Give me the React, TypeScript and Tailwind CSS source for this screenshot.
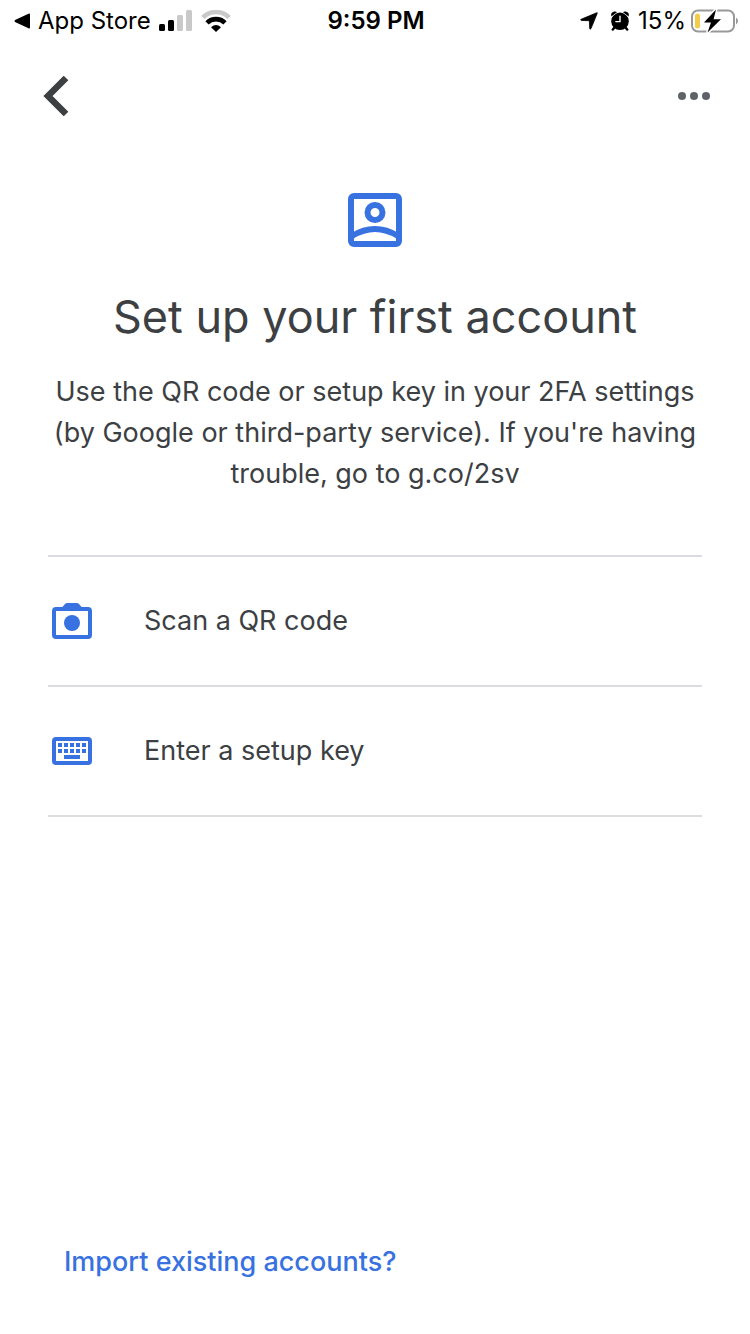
import React from 'react';

const SignalIcon: React.FC = () => (
  <svg className="w-[34px] h-[22px]" viewBox="0 0 34 22" aria-hidden="true">
    <rect x="0" y="14" width="6" height="7" rx="1.5" fill="#000" />
    <rect x="9" y="10" width="6" height="11" rx="1.5" fill="#000" />
    <rect x="18" y="5" width="6" height="16" rx="1.5" fill="#c9c9c9" />
    <rect x="27" y="0" width="6" height="21" rx="1.5" fill="#c9c9c9" />
  </svg>
);

const WifiIcon: React.FC = () => (
  <svg className="w-[30px] h-[22px]" viewBox="0 0 30 22" fill="none" aria-hidden="true">
    <path d="M1.8 7.5C9 0.2 21 0.2 28.2 7.5" stroke="#c9c9c9" strokeWidth="4.6" />
    <path d="M6 12.8C11 7.9 19 7.9 24 12.8" stroke="#000" strokeWidth="4.6" />
    <path d="M10 17.2Q15 12.8 20 17.2L15 22Z" fill="#000" />
  </svg>
);

const LocationIcon: React.FC = () => (
  <svg className="w-[18px] h-[18px]" viewBox="0 0 18 18" aria-hidden="true">
    <path
      d="M16.6 0.8Q17.6 0.4 17.2 1.4L11 16.6Q10.2 17.8 9.7 16.6L9.4 9.3Q9.4 8.7 8.8 8.7L1.2 8.4Q0 7.9 1.1 7.3Z"
      fill="#000"
      stroke="#000"
      strokeWidth="0.8"
    />
  </svg>
);

const AlarmIcon: React.FC = () => (
  <svg className="w-5 h-5" viewBox="-1 0 20 20" fill="none" aria-hidden="true">
    <circle cx="9" cy="10.3" r="8.8" fill="#000" />
    <path d="M0.4 5.4Q-0.8 1.4 3.2 0.5Q5 0.2 6.2 1.4ZM17.6 5.4Q18.8 1.4 14.8 0.5Q13 0.2 11.8 1.4Z" fill="#000" />
    <path d="M6.4 1.2L0.6 5.8M11.6 1.2L17.4 5.8" stroke="#fff" strokeWidth="0.6" />
    <path d="M3.5 16.5L1.8 18.6M14.5 16.5L16.2 18.6" stroke="#000" strokeWidth="2.4" strokeLinecap="round" />
    <path d="M9 5.2V10.6H4.8" stroke="#fff" strokeWidth="1.4" strokeLinecap="round" />
  </svg>
);

const BatteryIcon: React.FC = () => (
  <svg className="w-12 h-6" viewBox="0 0 48 24" fill="none" aria-hidden="true">
    <rect x="2" y="1.5" width="42" height="21" rx="6" stroke="#999" strokeWidth="2" />
    <path d="M46 8.5Q48 9.5 48 12T46 15.5Z" fill="#999" />
    <rect x="5" y="4.5" width="5" height="15" rx="2.5" fill="#f3cc4b" />
    <path
      d="M26 0.5L14 13.4H21L17.5 23.5L31 10.2H23.6Z"
      fill="#000"
      stroke="#fff"
      strokeWidth="3"
      strokeLinejoin="round"
      paintOrder="stroke"
    />
  </svg>
);

const AccountIcon: React.FC = () => (
  <svg className="w-[54px] h-[54px]" viewBox="0 0 54 54" fill="none" stroke="currentColor" strokeWidth="6" aria-hidden="true">
    <rect x="3" y="3" width="48" height="48" rx="3" />
    <circle cx="27" cy="19.5" r="7.5" />
    <path d="M4 43Q27 29 50 43" />
  </svg>
);

const CameraIcon: React.FC = () => (
  <svg className="w-10 h-9" viewBox="0 0 40 36" aria-hidden="true">
    <path d="M9.5 5L13 1Q14 0 15 0H25Q26 0 27 1L30.5 5Z" fill="currentColor" />
    <rect x="2" y="6" width="36" height="28" rx="2" fill="none" stroke="currentColor" strokeWidth="4" />
    <circle cx="20" cy="20" r="8" fill="currentColor" />
  </svg>
);

const KeyboardIcon: React.FC = () => (
  <svg className="w-10 h-7" viewBox="0 0 40 28" fill="currentColor" aria-hidden="true">
    <rect x="2" y="2" width="36" height="24" rx="2" fill="none" stroke="currentColor" strokeWidth="4" />
    {[6, 12, 18, 24, 30].map((x) => (
      <React.Fragment key={x}>
        <rect x={x} y="6" width="4" height="4" />
        <rect x={x} y="12" width="4" height="4" />
      </React.Fragment>
    ))}
    <rect x="12" y="18" width="16" height="4" />
  </svg>
);

const StatusBar: React.FC = () => (
  <div className="grid grid-cols-[1fr_auto_1fr] items-center h-[42px] pl-3.5 pr-3 text-2xl text-black">
    <div className="flex items-center gap-2">
      <a href="#app-store" className="flex items-center gap-2">
        <svg className="w-4 h-4" viewBox="0 0 16 16" aria-hidden="true">
          <path d="M16 1.5V14.5Q16 16 14.5 15.2L1 9Q0 8 1 7L14.5 0.8Q16 0 16 1.5Z" />
        </svg>
        App Store
      </a>
      <SignalIcon />
      <WifiIcon />
    </div>
    <time className="font-semibold">9:59 PM</time>
    <div className="flex items-center justify-end gap-1">
      <LocationIcon />
      <span className="pl-2 pr-1">
        <AlarmIcon />
      </span>
      <span>15%</span>
      <BatteryIcon />
    </div>
  </div>
);

const OptionRow: React.FC<{ icon: React.ReactNode; label: string }> = ({ icon, label }) => (
  <li className="border-b-2 border-[#dadce0]">
    <button type="button" className="flex items-center w-full h-32 pl-1 gap-[52px] text-left">
      <span className="text-[#3871e0]">{icon}</span>
      {label}
    </button>
  </li>
);

const App: React.FC = () => (
  <div className="flex flex-col min-h-screen bg-white text-[#3c4043] font-['Inter',sans-serif]">
    <StatusBar />

    <header className="flex items-center justify-between h-[108px] px-10">
      <button type="button" aria-label="Back">
        <svg className="w-8 h-10" viewBox="0 0 32 40" fill="none" stroke="currentColor" strokeWidth="6.5" aria-hidden="true">
          <path d="M26 2L8 20L26 38" />
        </svg>
      </button>
      <button type="button" aria-label="More options" className="text-[#5f6368]">
        <svg className="w-8 h-8" viewBox="0 0 32 32" fill="currentColor" aria-hidden="true">
          <circle cx="4" cy="16" r="4" />
          <circle cx="16" cy="16" r="4" />
          <circle cx="28" cy="16" r="4" />
        </svg>
      </button>
    </header>

    <main className="flex flex-col flex-1 px-12 pt-[43px] text-[27px]">
      <div className="flex justify-center text-[#3871e0]">
        <AccountIcon />
      </div>
      <h1 className="mt-[38px] text-center text-[45px] leading-[64px]">Set up your first account</h1>
      <p className="mt-[22px] text-center leading-[41px]">
        Use the QR code or setup key in your 2FA settings (by Google or third-party service). If you're having
        trouble, go to g.co/2sv
      </p>
      <ul className="mt-[61px] border-t-2 border-[#dadce0]">
        <OptionRow icon={<CameraIcon />} label="Scan a QR code" />
        <OptionRow icon={<KeyboardIcon />} label="Enter a setup key" />
      </ul>
    </main>

    <footer className="px-16 pb-12">
      <a href="#import" className="text-[27px] leading-[48px] font-medium text-[#3871e0]">
        Import existing accounts?
      </a>
    </footer>
  </div>
);

export default App;
